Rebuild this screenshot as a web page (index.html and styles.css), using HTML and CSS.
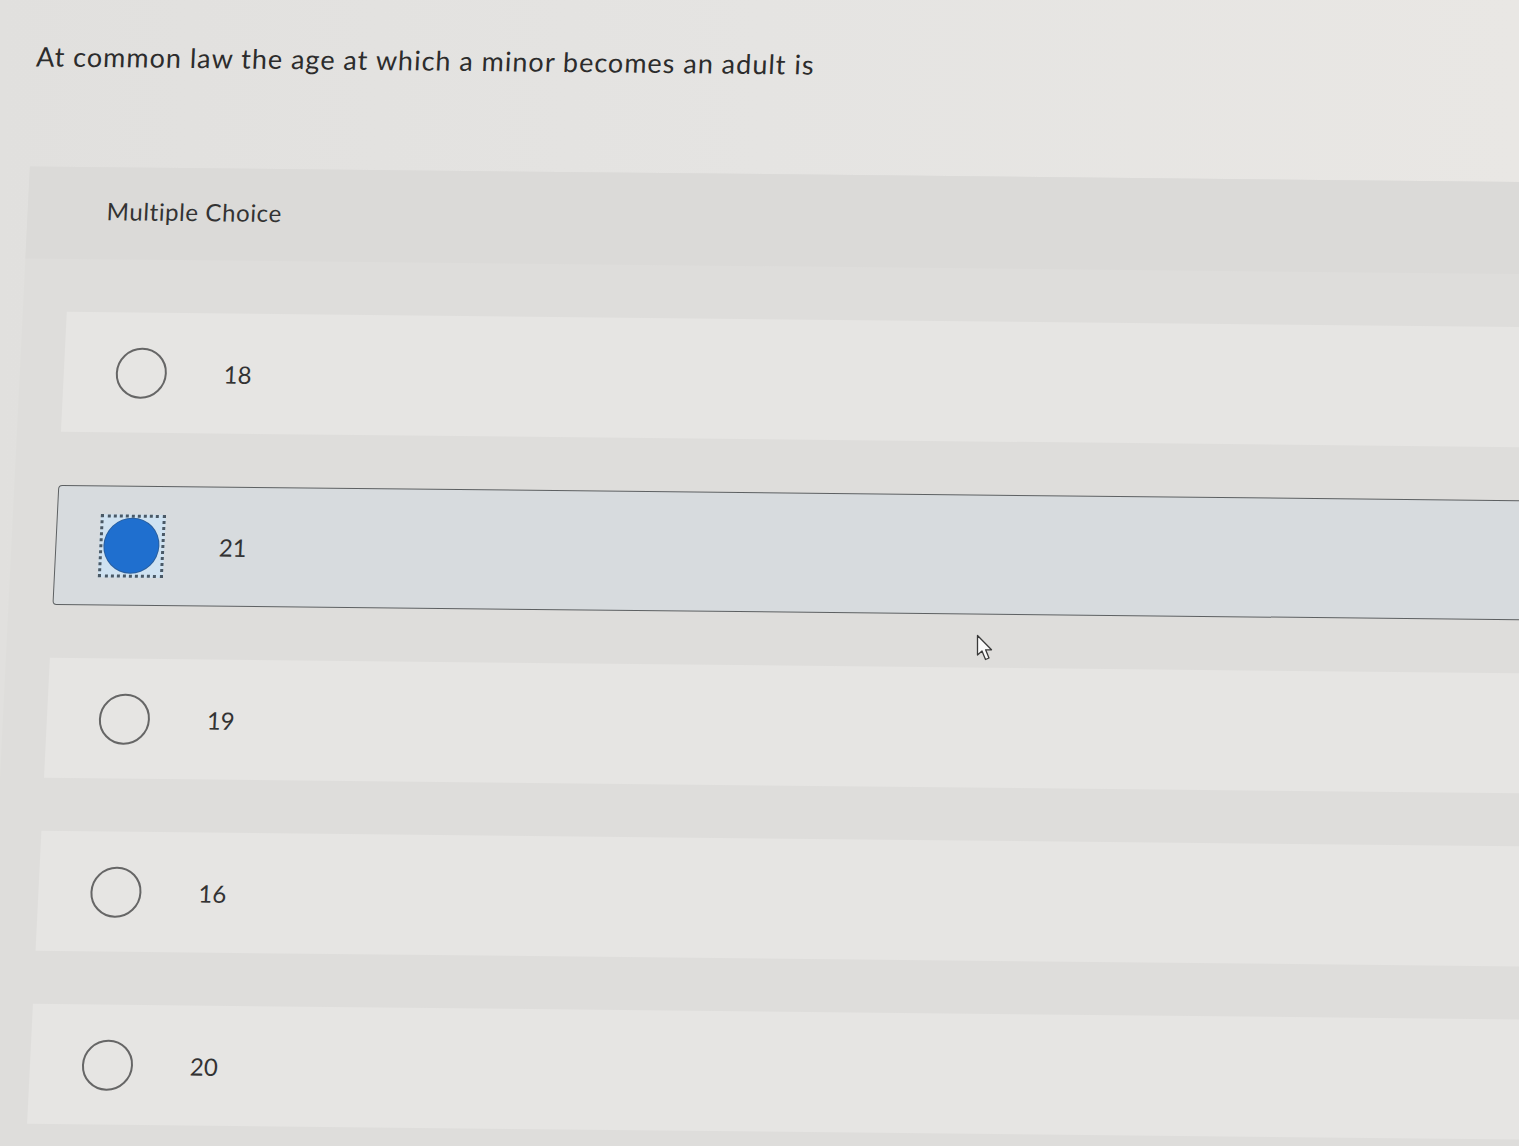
FILE: index.html
```html
<!DOCTYPE html>
<html lang="en">
<head>
<meta charset="utf-8">
<title>Multiple Choice</title>
<link rel="stylesheet" href="styles.css">
</head>
<body>
<div class="sheet">
  <p class="question">At common law the age at which a minor becomes an adult is</p>
  <section class="panel">
    <div class="panel-head">Multiple Choice</div>
    <ul class="choices">
      <li class="choice"><span class="radio"></span><span class="label">18</span></li>
      <li class="choice selected"><span class="focus"><span class="dot"></span></span><span class="label">21</span></li>
      <li class="choice"><span class="radio"></span><span class="label">19</span></li>
      <li class="choice"><span class="radio"></span><span class="label">16</span></li>
      <li class="choice"><span class="radio"></span><span class="label">20</span></li>
    </ul>
  </section>
</div>
<svg class="cursor" width="20" height="28" viewBox="0 0 20 28" aria-hidden="true">
  <path d="M1.5 1.5 L1.5 21 L6 17 L9.5 25.5 L13 24 L9.6 15.8 L15.5 15.8 Z" fill="#fafafa" stroke="#3a3a3a" stroke-width="1.3" stroke-linejoin="round"/>
</svg>
</body>
</html>
```

FILE: styles.css
```css
html, body {
  margin: 0;
  padding: 0;
  height: 100%;
  overflow: hidden;
}

body {
  background: linear-gradient(to right, #e1e0de 0%, #e5e4e2 50%, #e9e7e4 100%);
  font-family: Lato, "Open Sans", "Liberation Sans", sans-serif;
  color: #2f2f2f;
  position: relative;
}

.sheet {
  width: 1640px;
  transform-origin: 0 0;
  transform: skew(-2.8deg, 0.6deg);
  padding-top: 40px;
}

.question {
  margin: 0 0 94px 39px;
  font-size: 27px;
  line-height: 32px;
  letter-spacing: 1px;
  color: #2c2c2c;
}

.panel {
  margin-left: 38px;
  background: #dedddb;
  padding-bottom: 60px;
}

.panel-head {
  background: #dbdad8;
  padding: 29px 0 33px 79px;
  font-size: 24px;
  line-height: 30px;
  letter-spacing: 0.6px;
  color: #333;
}

.choices {
  list-style: none;
  margin: 53px 0 0 44px;
  padding: 0;
  display: flex;
  flex-direction: column;
  gap: 53px;
}

.choice {
  height: 120px;
  box-sizing: border-box;
  background: #e6e5e3;
  display: flex;
  align-items: center;
  padding-left: 52px;
}

.radio {
  width: 51px;
  height: 51px;
  box-sizing: border-box;
  border: 2px solid #666;
  border-radius: 50%;
  flex: none;
}

.label {
  margin-left: 57px;
  font-size: 24px;
  color: #333;
}

.choice.selected {
  background: #d7dbde;
  border: 1.5px solid #5d6062;
  border-radius: 4px;
  padding-left: 42.5px;
}

.choice.selected .label {
  margin-left: 55px;
}

.focus {
  width: 65px;
  height: 63px;
  box-sizing: border-box;
  border: 3px dotted #4a5966;
  background: #cfe2f1;
  display: flex;
  align-items: center;
  justify-content: center;
  flex: none;
}

.dot {
  width: 54px;
  height: 54px;
  border-radius: 50%;
  background: #1f6fcf;
  box-shadow: 0 0 0 1px #2a5f9e;
}

.cursor {
  position: absolute;
  left: 976px;
  top: 634px;
}
```
